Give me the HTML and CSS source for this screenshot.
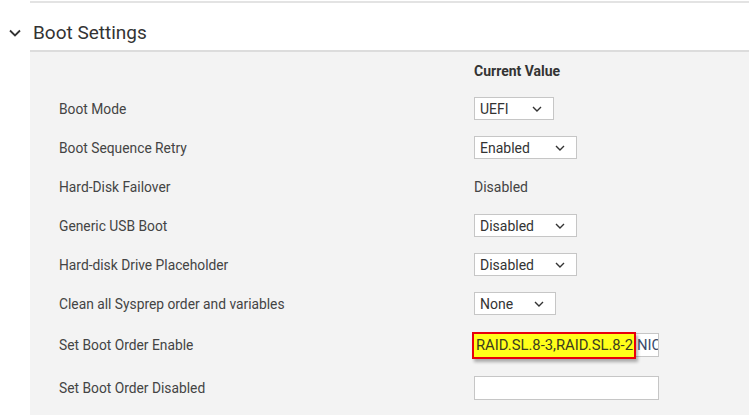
FILE: index.html
```html
<!DOCTYPE html>
<html lang="en">
<head>
  <meta charset="UTF-8">
  <meta name="viewport" content="width=device-width, initial-scale=1.0">
  <title>Boot Settings</title>
  <link rel="stylesheet" href="styles.css">
</head>
<body>
  <div class="top-rule"></div>

  <div class="section-head">
    <svg class="chevron" width="12" height="8" viewBox="0 0 12 8">
      <path d="M1 1.5 L6 6.5 L11 1.5" fill="none" stroke="#333" stroke-width="1.8"/>
    </svg>
    <h2>Boot Settings</h2>
  </div>

  <div class="panel">
    <div class="row head">
      <div class="label"></div>
      <div class="value"><b>Current Value</b></div>
    </div>

    <div class="row">
      <div class="label">Boot Mode</div>
      <div class="value">
        <div class="select w80"><span>UEFI</span><svg width="10" height="6" viewBox="0 0 10 6"><path d="M1 1 L5 5 L9 1" fill="none" stroke="#333" stroke-width="1.4"/></svg></div>
      </div>
    </div>

    <div class="row">
      <div class="label">Boot Sequence Retry</div>
      <div class="value">
        <div class="select w103"><span>Enabled</span><svg width="10" height="6" viewBox="0 0 10 6"><path d="M1 1 L5 5 L9 1" fill="none" stroke="#333" stroke-width="1.4"/></svg></div>
      </div>
    </div>

    <div class="row">
      <div class="label">Hard-Disk Failover</div>
      <div class="value">Disabled</div>
    </div>

    <div class="row">
      <div class="label">Generic USB Boot</div>
      <div class="value">
        <div class="select w103"><span>Disabled</span><svg width="10" height="6" viewBox="0 0 10 6"><path d="M1 1 L5 5 L9 1" fill="none" stroke="#333" stroke-width="1.4"/></svg></div>
      </div>
    </div>

    <div class="row">
      <div class="label">Hard-disk Drive Placeholder</div>
      <div class="value">
        <div class="select w103"><span>Disabled</span><svg width="10" height="6" viewBox="0 0 10 6"><path d="M1 1 L5 5 L9 1" fill="none" stroke="#333" stroke-width="1.4"/></svg></div>
      </div>
    </div>

    <div class="row">
      <div class="label">Clean all Sysprep order and variables</div>
      <div class="value">
        <div class="select w82"><span>None</span><svg width="10" height="6" viewBox="0 0 10 6"><path d="M1 1 L5 5 L9 1" fill="none" stroke="#333" stroke-width="1.4"/></svg></div>
      </div>
    </div>

    <div class="row tall">
      <div class="label">Set Boot Order Enable</div>
      <div class="value">
        <div class="field">
          <span class="mark">RAID.SL.8-3,RAID.SL.8-2</span><span class="rest">NIC</span>
        </div>
      </div>
    </div>

    <div class="row tall">
      <div class="label">Set Boot Order Disabled</div>
      <div class="value">
        <div class="field"></div>
      </div>
    </div>
  </div>
</body>
</html>
```

FILE: styles.css
```css
body {
  font-family: Roboto, "Liberation Sans", Arial, sans-serif;
  font-size: 14px;
  color: #444;
  background-color: #fff;
  margin: 0;
  padding: 0;
}

.top-rule {
  margin: 1px 0 0 30px;
  height: 2px;
  background-color: #e3e3e3;
}

.section-head {
  display: flex;
  align-items: center;
  box-sizing: border-box;
  height: 47px;
  padding: 11px 0 0 9px;
}

.chevron {
  margin-right: 12px;
  margin-top: 2px;
}

.section-head h2 {
  margin: 0;
  font-size: 19px;
  font-weight: 400;
  color: #333;
}

.panel {
  margin-left: 30px;
  background-color: #f3f3f3;
  border-top: 2px solid #dcdcdc;
  padding-left: 29px;
  min-height: 370px;
}

.row {
  display: flex;
  align-items: center;
  height: 39px;
}

.row.head {
  height: 37px;
}

.row.tall {
  height: 43px;
}

.label {
  width: 415px;
  font-size: 13.8px;
  color: #444;
}

.value {
  color: #444;
}

.value b {
  color: #333;
  font-weight: 700;
}

/* Select boxes */
.select {
  display: flex;
  align-items: center;
  justify-content: space-between;
  box-sizing: border-box;
  height: 23px;
  padding: 0 11px 0 5px;
  background-color: #fff;
  border: 1px solid #c6c6c6;
  color: #333;
}

.w80 { width: 80px; }
.w82 { width: 82px; }
.w103 { width: 103px; }

/* Text fields */
.field {
  display: flex;
  align-items: center;
  box-sizing: border-box;
  width: 185px;
  height: 24px;
  background-color: #fff;
  border: 1px solid #c6c6c6;
  font-size: 14.8px;
  color: #3a4a6a;
}

/* highlighted part of the boot order */
.mark {
  flex: none;
  box-sizing: border-box;
  height: 27px;
  margin: -1px 0 -2px -3px;
  padding: 0 1px 0 2px;
  line-height: 23px;
  background-color: #ffff1a;
  border: 2px solid #e8000b;
  color: #3b3b1f;
  box-shadow: 2px 3px 3px rgba(0, 0, 0, 0.3);
}

.rest {
  flex: 1;
  min-width: 0;
  padding-left: 1px;
  overflow: hidden;
  white-space: nowrap;
}
```
